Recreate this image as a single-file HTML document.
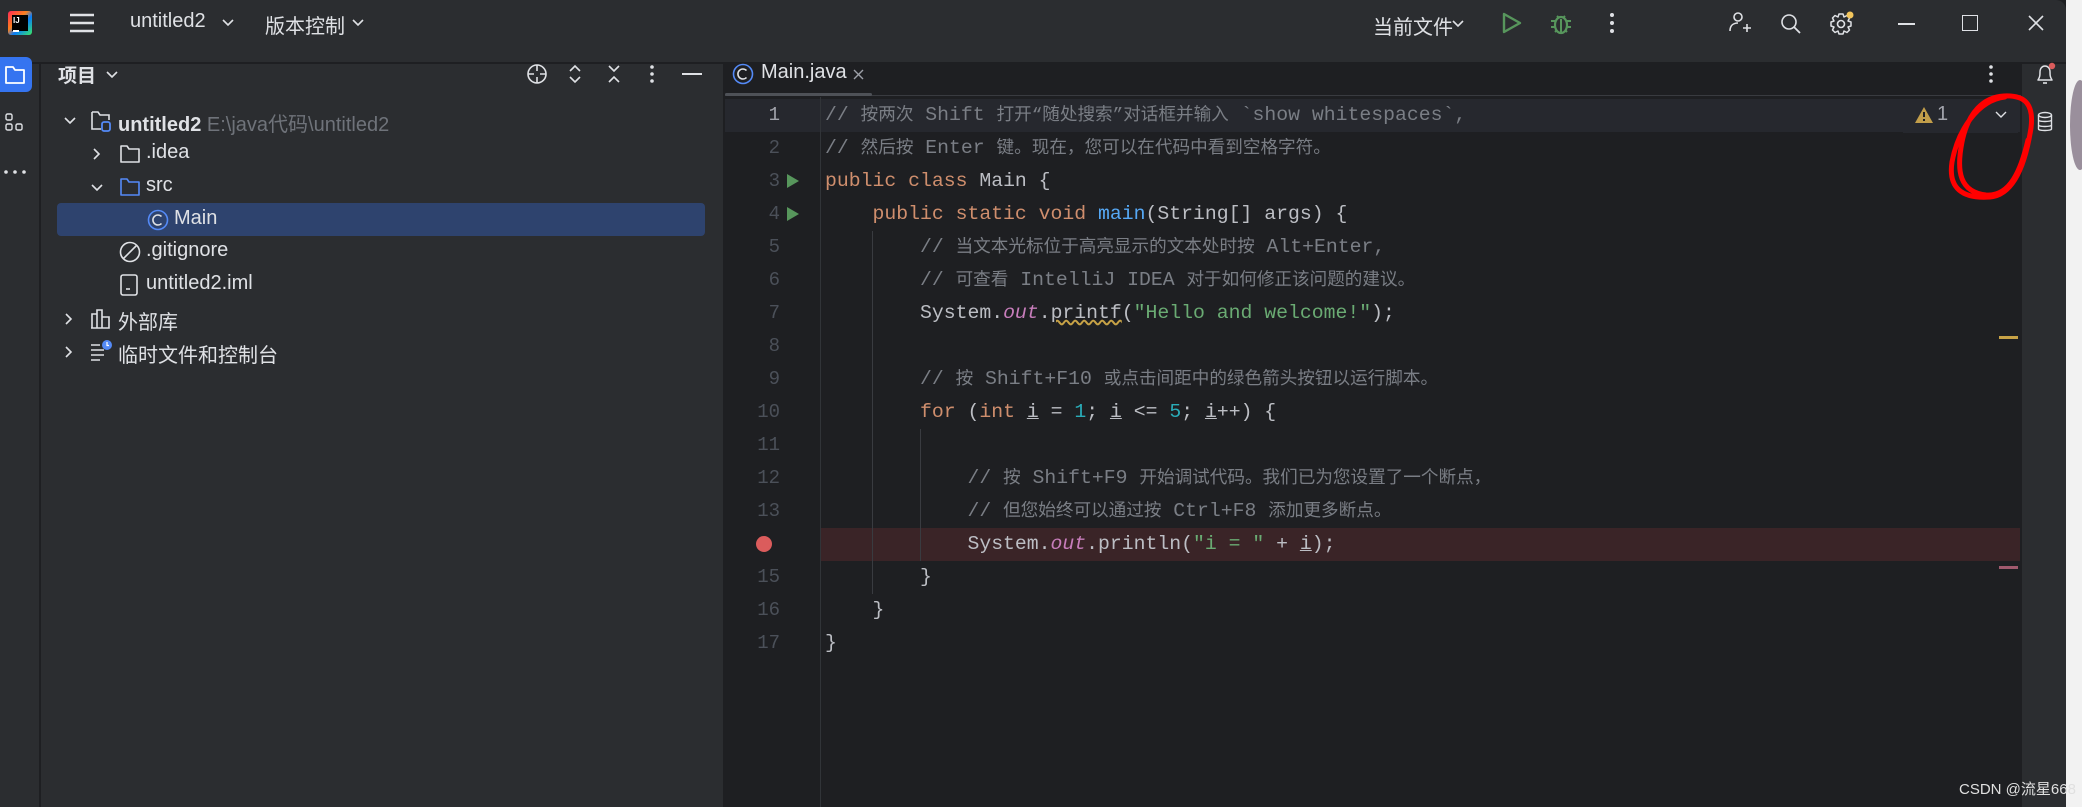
<!DOCTYPE html>
<html><head><meta charset="utf-8"><style>
*{margin:0;padding:0;box-sizing:border-box}
body{width:2082px;height:807px;overflow:hidden;background:#1e1f22;position:relative;font-family:"Liberation Sans","Noto Sans CJK SC",sans-serif;color:#dfe1e5}
.a{position:absolute}
.ui{font-size:20px;color:#dfe1e5;white-space:nowrap}
.code{position:absolute;left:825px;font-family:"Liberation Mono","Noto Sans CJK SC",monospace;font-size:19.8px;color:#bcbec4;white-space:pre;line-height:33px;height:33px}
.k{color:#cf8e6d}.m{color:#56a8f5}.s{color:#6aab73}.n{color:#2aacb8}.cm{color:#7a7e85}.o{color:#c77dbb;font-style:italic}
.z{font-size:17.6px}
.ln{position:absolute;width:60px;left:720px;text-align:right;font-family:"Liberation Mono",monospace;font-size:19px;color:#4b5059;line-height:33px}
svg{position:absolute;overflow:visible}
</style></head><body>
<div class="a" style="left:0;top:0;width:2066px;height:63px;background:#2b2d30;border-bottom:1px solid #1e1f22;border-top-right-radius:10px"></div>
<div class="a" style="left:2066px;top:0;width:16px;height:807px;background:#f2f2f2"></div>
<div class="a" style="left:2070px;top:80px;width:20px;height:90px;border-radius:50%;background:#9a8f9c"></div>
<div class="a" style="left:8px;top:11px;width:24px;height:24px;background:linear-gradient(135deg,#fe2857,#fc801d 40%,#087cfa 60%,#3bea62);border-radius:3px"></div>
<div class="a" style="left:12px;top:15px;width:16px;height:16px;background:#000;color:#fff;font:bold 8px 'Liberation Sans';padding:1px">IJ<div style="width:6px;height:1.5px;background:#fff;margin-top:5px"></div></div>
<svg style="left:70px;top:13px" width="24" height="20"><path d="M0 2H24M0 10H24M0 18H24" stroke="#dfe1e5" stroke-width="2.4"/></svg>
<div class="a ui" style="left:130px;top:10px">untitled2</div>
<svg style="left:222px;top:19px" width="12" height="8"><path d="M1 1L6 6L11 1" stroke="#dfe1e5" fill="none" stroke-width="1.6"/></svg>
<div class="a ui" style="left:265px;top:10px">版本控制</div>
<svg style="left:352px;top:19px" width="12" height="8"><path d="M1 1L6 6L11 1" stroke="#dfe1e5" fill="none" stroke-width="1.6"/></svg>
<div class="a ui" style="left:1373px;top:11px">当前文件</div>
<svg style="left:1452px;top:20px" width="12" height="8"><path d="M1 1L6 6L11 1" stroke="#dfe1e5" fill="none" stroke-width="1.6"/></svg>
<svg style="left:1502px;top:12px" width="20" height="22"><path d="M2 2L18 11L2 20Z" stroke="#57965c" stroke-width="2.4" fill="none" stroke-linejoin="round"/></svg>
<svg style="left:1549px;top:11px" width="24" height="24"><ellipse cx="12" cy="14" rx="6" ry="8" stroke="#57965c" stroke-width="2.2" fill="none"/><path d="M8 5L10 7M16 5L14 7M2 10H6M18 10H22M2 16H6M18 16H22M6 21L8 19M18 21L16 19M12 8V22" stroke="#57965c" stroke-width="2"/></svg>
<svg style="left:1610px;top:13px" width="4" height="20"><circle cx="2" cy="2" r="2" fill="#dfe1e5"/><circle cx="2" cy="10" r="2" fill="#dfe1e5"/><circle cx="2" cy="18" r="2" fill="#dfe1e5"/></svg>
<svg style="left:1728px;top:11px" width="24" height="24"><circle cx="10" cy="6" r="4" stroke="#dfe1e5" stroke-width="1.6" fill="none"/><path d="M2 20C2 14 6 12 10 12M15 17H23M19 13V21" stroke="#dfe1e5" stroke-width="1.6" fill="none"/></svg>
<svg style="left:1780px;top:13px" width="22" height="22"><circle cx="9" cy="9" r="7" stroke="#dfe1e5" stroke-width="1.6" fill="none"/><path d="M14 14L20 20" stroke="#dfe1e5" stroke-width="1.8"/></svg>
<svg style="left:1830px;top:12px" width="24" height="24"><circle cx="11" cy="12" r="3.5" stroke="#dfe1e5" stroke-width="1.6" fill="none"/><path d="M9 2H13L14 5L17 3.5L19.5 6L18 9L21 10V14L18 15L19.5 18L17 20.5L14 19L13 22H9L8 19L5 20.5L2.5 18L4 15L1 14V10L4 9L2.5 6L5 3.5L8 5Z" stroke="#dfe1e5" stroke-width="1.5" fill="none" stroke-linejoin="round"/><circle cx="20" cy="3" r="3.5" fill="#f2c55c"/></svg>
<div class="a" style="left:1898px;top:23px;width:17px;height:1.6px;background:#dfe1e5"></div>
<div class="a" style="left:1962px;top:15px;width:16px;height:16px;border:1.6px solid #dfe1e5"></div>
<svg style="left:2028px;top:15px" width="16" height="16"><path d="M1 1L15 15M15 1L1 15" stroke="#dfe1e5" stroke-width="1.6"/></svg>

<div class="a" style="left:0;top:64px;width:40px;height:743px;background:#2b2d30;border-right:1px solid #1e1f22"></div>
<div class="a" style="left:0;top:57px;width:32px;height:35px;background:#3574f0;border-radius:0 6px 6px 0"></div>
<svg style="left:4px;top:65px" width="22" height="20"><path d="M2 2H9L11 5H20V18H2Z" stroke="#fff" stroke-width="1.8" fill="none" stroke-linejoin="round"/></svg>
<svg style="left:5px;top:113px" width="20" height="20"><rect x="1" y="1" width="6" height="6" rx="1.5" stroke="#dfe1e5" stroke-width="1.4" fill="none"/><rect x="1" y="11" width="6" height="6" rx="1.5" stroke="#dfe1e5" stroke-width="1.4" fill="none"/><rect x="11" y="11" width="6" height="6" rx="1.5" stroke="#dfe1e5" stroke-width="1.4" fill="none"/></svg>
<svg style="left:4px;top:170px" width="22" height="4"><circle cx="2" cy="2" r="1.8" fill="#dfe1e5"/><circle cx="11" cy="2" r="1.8" fill="#dfe1e5"/><circle cx="20" cy="2" r="1.8" fill="#dfe1e5"/></svg>

<div class="a" style="left:41px;top:64px;width:683px;height:743px;background:#2b2d30;border-right:1px solid #1e1f22"></div>
<div class="a ui" style="left:58px;top:61px;font-size:19px;font-weight:bold">项目</div>
<svg style="left:106px;top:71px" width="12" height="8"><path d="M1 1L6 6L11 1" stroke="#dfe1e5" fill="none" stroke-width="1.6"/></svg>
<svg style="left:526px;top:63px" width="22" height="22"><circle cx="11" cy="11" r="9" stroke="#dfe1e5" stroke-width="1.6" fill="none"/><path d="M11 2V8M11 14V20M2 11H8M14 11H20" stroke="#dfe1e5" stroke-width="1.6"/></svg>
<svg style="left:569px;top:64px" width="12" height="20"><path d="M1 7L6 2L11 7M1 13L6 18L11 13" stroke="#dfe1e5" stroke-width="1.6" fill="none"/></svg>
<svg style="left:608px;top:64px" width="12" height="20"><path d="M1 2L6 7L11 2M1 18L6 13L11 18" stroke="#dfe1e5" stroke-width="1.6" fill="none"/></svg>
<svg style="left:650px;top:65px" width="4" height="18"><circle cx="2" cy="2" r="1.8" fill="#dfe1e5"/><circle cx="2" cy="9" r="1.8" fill="#dfe1e5"/><circle cx="2" cy="16" r="1.8" fill="#dfe1e5"/></svg>
<div class="a" style="left:682px;top:73px;width:20px;height:1.6px;background:#dfe1e5"></div>

<div class="a" style="left:57px;top:203px;width:648px;height:33px;background:#2e436e;border-radius:4px"></div>
<svg style="left:64px;top:117px" width="12" height="8"><path d="M1 1L6 6L11 1" stroke="#dfe1e5" fill="none" stroke-width="1.6"/></svg>
<svg style="left:90px;top:110px" width="22" height="22"><path d="M2 2H8L10 5H19V10M11 19H2V2" stroke="#dfe1e5" stroke-width="1.6" fill="none"/><rect x="12" y="12" width="8" height="9" rx="2" stroke="#548af7" stroke-width="1.8" fill="none"/></svg>
<div class="a ui" style="left:118px;top:108px;font-weight:bold">untitled2 <span style="color:#6f737a;font-weight:normal">E:\java代码\untitled2</span></div>

<svg style="left:93px;top:148px" width="8" height="12"><path d="M1 1L6 6L1 11" stroke="#dfe1e5" fill="none" stroke-width="1.6"/></svg>
<svg style="left:119px;top:144px" width="22" height="20"><path d="M2 2H8L10 5H20V18H2Z" stroke="#dfe1e5" stroke-width="1.6" fill="none" stroke-linejoin="round"/></svg>
<div class="a ui" style="left:146px;top:141px">.idea</div>

<svg style="left:91px;top:184px" width="12" height="8"><path d="M1 1L6 6L11 1" stroke="#dfe1e5" fill="none" stroke-width="1.6"/></svg>
<svg style="left:119px;top:177px" width="22" height="20"><path d="M2 2H8L10 5H20V18H2Z" stroke="#548af7" stroke-width="1.6" fill="none" stroke-linejoin="round"/></svg>
<div class="a ui" style="left:146px;top:174px">src</div>

<svg style="left:147px;top:209px" width="22" height="22"><circle cx="11" cy="11" r="9.5" stroke="#548af7" stroke-width="1.6" fill="none"/><path d="M14.5 7.5A5 5 0 1 0 14.5 14.5" stroke="#dfe1e5" stroke-width="1.6" fill="none"/></svg>
<div class="a ui" style="left:174px;top:207px">Main</div>

<svg style="left:119px;top:241px" width="22" height="22"><circle cx="11" cy="11" r="9.5" stroke="#dfe1e5" stroke-width="1.6" fill="none"/><path d="M4 18L18 4" stroke="#dfe1e5" stroke-width="1.6"/></svg>
<div class="a ui" style="left:146px;top:239px">.gitignore</div>

<svg style="left:120px;top:274px" width="18" height="22"><rect x="1" y="1" width="16" height="20" rx="2" stroke="#dfe1e5" stroke-width="1.6" fill="none"/><path d="M6 15H10" stroke="#dfe1e5" stroke-width="1.6"/></svg>
<div class="a ui" style="left:146px;top:272px">untitled2.iml</div>

<svg style="left:65px;top:313px" width="8" height="12"><path d="M1 1L6 6L1 11" stroke="#dfe1e5" fill="none" stroke-width="1.6"/></svg>
<svg style="left:90px;top:308px" width="22" height="22"><path d="M2 20V6H7V20M7 20V2H12V20M12 20V9H19V20H1" stroke="#dfe1e5" stroke-width="1.6" fill="none"/></svg>
<div class="a ui" style="left:118px;top:306px">外部库</div>

<svg style="left:65px;top:346px" width="8" height="12"><path d="M1 1L6 6L1 11" stroke="#dfe1e5" fill="none" stroke-width="1.6"/></svg>
<svg style="left:90px;top:339px" width="24" height="22"><path d="M1 6H10M1 11H14M1 16H14M1 21H10" stroke="#dfe1e5" stroke-width="1.6"/><circle cx="17" cy="6" r="5" fill="#548af7"/><path d="M17 3V6.5H19" stroke="#fff" stroke-width="1.2" fill="none"/></svg>
<div class="a ui" style="left:118px;top:339px">临时文件和控制台</div>

<div class="a" style="left:725px;top:64px;width:1296px;height:32px;background:#1e1f22;border-bottom:1px solid #393b40"></div>
<svg style="left:732px;top:63px" width="22" height="22"><circle cx="11" cy="11" r="9.5" stroke="#548af7" stroke-width="1.6" fill="none"/><path d="M14.5 7.5A5 5 0 1 0 14.5 14.5" stroke="#dfe1e5" stroke-width="1.6" fill="none"/></svg>
<div class="a ui" style="left:761px;top:61px">Main.java</div>
<svg style="left:853px;top:69px" width="11" height="11"><path d="M1 1L10 10M10 1L1 10" stroke="#9da0a8" stroke-width="1.4"/></svg>
<div class="a" style="left:725px;top:93px;width:147px;height:3px;background:#4e5157;border-radius:2px"></div>
<svg style="left:1989px;top:65px" width="4" height="18"><circle cx="2" cy="2" r="1.8" fill="#dfe1e5"/><circle cx="2" cy="9" r="1.8" fill="#dfe1e5"/><circle cx="2" cy="16" r="1.8" fill="#dfe1e5"/></svg>

<div class="a" style="left:725px;top:99px;width:1295px;height:33px;background:#26282e"></div>
<div class="a" style="left:820px;top:528px;width:1200px;height:33px;background:#3a2427"></div>
<div class="a" style="left:820px;top:97px;width:1px;height:710px;background:#313438"></div>
<div class="a" style="left:872px;top:231px;width:1px;height:363px;background:#393b40"></div>
<div class="a" style="left:920px;top:429px;width:1px;height:132px;background:#393b40"></div>

<div class="ln" style="top:99px;color:#a1a3ab">1</div>
<div class="ln" style="top:132px">2</div>
<div class="ln" style="top:165px">3</div>
<div class="ln" style="top:198px">4</div>
<div class="ln" style="top:231px">5</div>
<div class="ln" style="top:264px">6</div>
<div class="ln" style="top:297px">7</div>
<div class="ln" style="top:330px">8</div>
<div class="ln" style="top:363px">9</div>
<div class="ln" style="top:396px">10</div>
<div class="ln" style="top:429px">11</div>
<div class="ln" style="top:462px">12</div>
<div class="ln" style="top:495px">13</div>
<div class="ln" style="top:561px">15</div>
<div class="ln" style="top:594px">16</div>
<div class="ln" style="top:627px">17</div>
<svg style="left:786px;top:173px" width="14" height="16"><path d="M1 1L13 8L1 15Z" fill="#57965c"/></svg>
<svg style="left:786px;top:206px" width="14" height="16"><path d="M1 1L13 8L1 15Z" fill="#57965c"/></svg>
<div class="a" style="left:756px;top:536px;width:16px;height:16px;border-radius:50%;background:#db5c5c"></div>

<div class="code cm" style="top:99px">// <span class="z">按两次</span> Shift <span class="z">打开“随处搜索”对话框并输入</span> `show whitespaces`,</div>
<div class="code cm" style="top:132px">// <span class="z">然后按</span> Enter <span class="z">键。现在，您可以在代码中看到空格字符。</span></div>
<div class="code" style="top:165px"><span class="k">public class</span> Main {</div>
<div class="code" style="top:198px">    <span class="k">public static void</span> <span class="m">main</span>(String[] args) {</div>
<div class="code cm" style="top:231px">        // <span class="z">当文本光标位于高亮显示的文本处时按</span> Alt+Enter,</div>
<div class="code cm" style="top:264px">        // <span class="z">可查看</span> IntelliJ IDEA <span class="z">对于如何修正该问题的建议。</span></div>
<div class="code" style="top:297px">        System.<span class="o">out</span>.<span style="text-decoration:underline wavy #c7a246">printf</span>(<span class="s">"Hello and welcome!"</span>);</div>
<div class="code cm" style="top:363px">        // <span class="z">按</span> Shift+F10 <span class="z">或点击间距中的绿色箭头按钮以运行脚本。</span></div>
<div class="code" style="top:396px">        <span class="k">for</span> (<span class="k">int</span> <u>i</u> = <span class="n">1</span>; <u>i</u> &lt;= <span class="n">5</span>; <u>i</u>++) {</div>
<div class="code cm" style="top:462px">            // <span class="z">按</span> Shift+F9 <span class="z">开始调试代码。我们已为您设置了一个断点，</span></div>
<div class="code cm" style="top:495px">            // <span class="z">但您始终可以通过按</span> Ctrl+F8 <span class="z">添加更多断点。</span></div>
<div class="code" style="top:528px">            System.<span class="o">out</span>.println(<span class="s">"i = "</span> + <u>i</u>);</div>
<div class="code" style="top:561px">        }</div>
<div class="code" style="top:594px">    }</div>
<div class="code" style="top:627px">}</div>

<div class="a" style="left:1903px;top:101px;width:115px;height:32px;background:#26282e"></div>
<svg style="left:1914px;top:106px" width="20" height="18"><path d="M10 1L19 17H1Z" fill="#c29e4a"/><path d="M10 6V11M10 13V15" stroke="#1e1f22" stroke-width="2"/></svg>
<div class="a ui" style="left:1937px;top:103px;color:#a1a3ab">1</div>
<svg style="left:1995px;top:111px" width="12" height="8"><path d="M1 1L6 6L11 1" stroke="#dfe1e5" fill="none" stroke-width="1.4"/></svg>
<div class="a" style="left:1999px;top:336px;width:19px;height:3px;background:#c7a246"></div>
<div class="a" style="left:1999px;top:566px;width:19px;height:3px;background:#a05a6e"></div>

<div class="a" style="left:2021px;top:64px;width:45px;height:743px;background:#2b2d30;border-left:1px solid #1e1f22"></div>
<svg style="left:2034px;top:62px" width="24" height="24"><path d="M4 18C6 15 6 13 6 10C6 6 8.5 4 11 4C13.5 4 16 6 16 10C16 13 16 15 18 18Z" stroke="#dfe1e5" stroke-width="1.5" fill="none" stroke-linejoin="round"/><path d="M9 21H13" stroke="#dfe1e5" stroke-width="1.6"/><circle cx="18" cy="4" r="3.2" fill="#db5c5c"/></svg>
<svg style="left:2037px;top:111px" width="16" height="22"><ellipse cx="8" cy="4" rx="6.5" ry="2.5" stroke="#dfe1e5" stroke-width="1.4" fill="none"/><path d="M1.5 4V18C1.5 20 14.5 20 14.5 18V4M1.5 9C1.5 11 14.5 11 14.5 9M1.5 14C1.5 16 14.5 16 14.5 14" stroke="#dfe1e5" stroke-width="1.4" fill="none"/></svg>

<svg style="left:0;top:0" width="2082" height="807"><path d="M2005 97C1978 100 1958 130 1952 162C1948 188 1962 199 1990 197C2015 195 2026 160 2031 128C2034 104 2025 95 2004 96C1984 97 1968 112 1962 142C1956 172 1960 192 1986 195C2010 197 2021 170 2028 140" stroke="#ff0000" stroke-width="5" fill="none" stroke-linecap="round"/></svg>

<div class="a" style="left:1959px;top:778px;font-size:15px;color:#e0e0e0;white-space:nowrap">CSDN @流星668</div>
</body></html>
